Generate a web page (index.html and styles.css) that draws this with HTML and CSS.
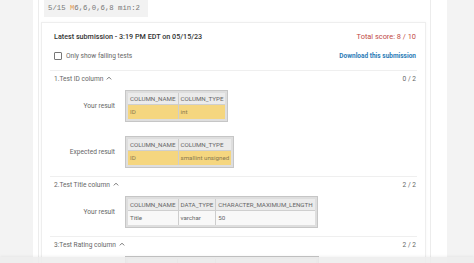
FILE: index.html
```html
<!DOCTYPE html>
<html lang="en">
<head>
    <meta charset="UTF-8">
    <meta name="viewport" content="width=device-width, initial-scale=1.0">
    <title>Submission results</title>
    <link rel="stylesheet" href="styles.css">
</head>
<body>

    <div class="page">
        <div class="column">

            <!-- Attempt summary -->
            <div class="code"><span>5/15</span> <span class="mark">M</span>6,6,0,6,8 min:2</div>

            <div class="card">
                <!-- Submission header -->
                <div class="card-head">
                    <div class="row">
                        <span class="title">Latest submission - 3:19 PM EDT on 05/15/23</span>
                        <span class="score">Total score: 8 / 10</span>
                    </div>
                    <div class="row">
                        <label class="check"><span class="box"></span>Only show failing tests</label>
                        <a class="download" href="#">Download this submission</a>
                    </div>
                </div>

                <!-- Test 1 -->
                <div class="test">
                    <div class="test-head">
                        <span>1.Test ID column <svg class="caret" viewBox="0 0 6 4"><path d="M0.8 3.4 L3 1.2 L5.2 3.4"/></svg></span>
                        <span>0 / 2</span>
                    </div>
                    <div class="result">
                        <div class="result-label">Your result</div>
                        <table class="fail">
                            <tr><th>COLUMN_NAME</th><th>COLUMN_TYPE</th></tr>
                            <tr><td>ID</td><td>int</td></tr>
                        </table>
                    </div>
                    <div class="result">
                        <div class="result-label">Expected result</div>
                        <table class="fail">
                            <tr><th>COLUMN_NAME</th><th>COLUMN_TYPE</th></tr>
                            <tr><td>ID</td><td>smallint unsigned</td></tr>
                        </table>
                    </div>
                </div>

                <!-- Test 2 -->
                <div class="test">
                    <div class="test-head">
                        <span>2.Test Title column <svg class="caret" viewBox="0 0 6 4"><path d="M0.8 3.4 L3 1.2 L5.2 3.4"/></svg></span>
                        <span>2 / 2</span>
                    </div>
                    <div class="result">
                        <div class="result-label">Your result</div>
                        <table>
                            <tr><th>COLUMN_NAME</th><th>DATA_TYPE</th><th>CHARACTER_MAXIMUM_LENGTH</th></tr>
                            <tr><td>Title</td><td>varchar</td><td>50</td></tr>
                        </table>
                    </div>
                </div>

                <!-- Test 3 -->
                <div class="test">
                    <div class="test-head">
                        <span>3:Test Rating column <svg class="caret" viewBox="0 0 6 4"><path d="M0.8 3.4 L3 1.2 L5.2 3.4"/></svg></span>
                        <span>2 / 2</span>
                    </div>
                    <div class="result">
                        <div class="result-label"></div>
                        <table class="next">
                            <tr><th></th><th></th><th></th></tr>
                        </table>
                    </div>
                </div>
            </div>

        </div>
    </div>

    <div class="footer-fade"></div>

</body>
</html>
```

FILE: styles.css
```css
/* Reset */
* {
    margin: 0;
    padding: 0;
    box-sizing: border-box;
}

body {
    font-family: 'Roboto', 'Liberation Sans', sans-serif;
    background: #f3f3f3;
    color: #555;
    overflow: hidden;
}

/* Page column */
.page {
    margin-left: 33px;
    width: 414px;
    min-height: 100vh;
    background: #fff;
    padding: 0 16px 0 5px;
}

.column {
    border-left: 1px solid #ececec;
    border-right: 1px solid #ececec;
    min-height: 100vh;
    padding: 0 4px 0 2px;
}

/* Attempt code */
.code {
    display: inline-block;
    margin-left: 3px;
    width: 104px;
    height: 17px;
    line-height: 17px;
    padding-left: 4px;
    background: #f2f2f2;
    font-family: 'Liberation Mono', monospace;
    font-size: 7.3px;
    color: #777;
    vertical-align: top;
}

.code .mark {
    color: #e2a05a;
}

/* Card */
.card {
    margin-top: 3px;
    border: 1px solid #eeeeee;
    box-shadow: 0 0 3px rgba(0, 0, 0, 0.04);
    padding: 0 8px;
    background: #fff;
}

.card-head {
    padding: 8px 1px 9px 4px;
    display: flex;
    flex-direction: column;
    gap: 10px;
}

.row {
    display: flex;
    justify-content: space-between;
    align-items: center;
    height: 10px;
}

.title {
    font-size: 7.2px;
    font-weight: 500;
    color: #333;
}

.score {
    font-size: 7.4px;
    color: #bf4a45;
}

.check {
    display: flex;
    align-items: center;
    gap: 4px;
    font-size: 6.6px;
    color: #666;
}

.box {
    width: 8px;
    height: 8px;
    border: 1px solid #777;
    border-radius: 1px;
}

.download {
    font-size: 6.5px;
    font-weight: 700;
    color: #2b7bb7;
    text-decoration: none;
}

/* Tests */
.test {
    border-top: 1px solid #efefef;
    padding: 3px 0 8px;
}

.test-head {
    display: flex;
    justify-content: space-between;
    align-items: center;
    height: 10px;
    padding: 0 1px 0 4px;
    font-size: 6.6px;
    color: #666;
}

.caret {
    width: 6px;
    height: 4px;
    margin-left: 1px;
    fill: none;
    stroke: #666;
    stroke-width: 0.9;
    vertical-align: 1px;
}

.result {
    display: grid;
    grid-template-columns: 65px auto;
    gap: 10px;
    align-items: center;
    justify-content: start;
    margin-top: 6px;
}

.result + .result {
    margin-top: 14px;
}

.result-label {
    text-align: right;
    font-size: 6.6px;
    color: #666;
}

/* Result tables */
table {
    border: 1px solid #c6c6c6;
    background: #dedede;
    padding: 2px;
    border-collapse: separate;
    border-spacing: 0;
    font-size: 6.2px;
    color: #666;
}

th,
td {
    height: 12px;
    padding: 0 2px;
    text-align: left;
    font-weight: 400;
    white-space: nowrap;
    border-right: 1px solid #cdcdcd;
}

th:last-child,
td:last-child {
    border-right: none;
}

th {
    background: #ebebeb;
    border-bottom: 1px solid #cfcfcf;
}

td {
    background: #f8f8f8;
    height: 14px;
}

.fail td {
    background: #f5d67f;
    color: #8a7a50;
}

.next th:nth-child(1) { width: 50px; }
.next th:nth-child(2) { width: 38px; }
.next th:nth-child(3) { width: 100px; }

/* Bottom fade */
.footer-fade {
    position: fixed;
    left: 0;
    right: 0;
    bottom: 0;
    height: 6px;
    background: rgba(236, 236, 236, 0.85);
    box-shadow: 0 -1px 3px rgba(0, 0, 0, 0.05);
}
```
